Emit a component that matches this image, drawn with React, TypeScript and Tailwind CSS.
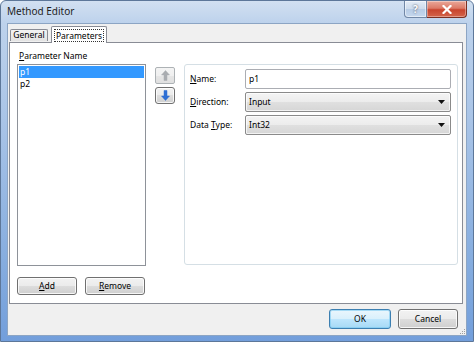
import React from "react";

const font = { fontFamily: '"Noto Sans", "Open Sans", "Liberation Sans", Arial, sans-serif' };

const btn =
  "flex items-center justify-center rounded-[3px] border border-[#707070] bg-[linear-gradient(to_bottom,#f2f2f2_0%,#ebebeb_50%,#dddddd_50%,#cfcfcf_100%)] shadow-[inset_0_0_0_1px_rgba(255,255,255,0.8)] text-[8.5px] text-black";

function Arrow({ color, down }: { color: string; down?: boolean }) {
  return (
    <svg width="9" height="11" viewBox="0 0 9 11" style={{ transform: down ? "rotate(180deg)" : undefined }}>
      <path d="M4.5 0.5 L8.5 5 H6 V10.5 H3 V5 H0.5 Z" fill={color} stroke={color} strokeWidth="0.5" strokeLinejoin="round" />
    </svg>
  );
}

function Combo({ value }: { value: string }) {
  return (
    <div className="flex h-[20px] flex-1 items-center justify-between rounded-[2px] border border-[#8a8a8a] bg-[linear-gradient(to_bottom,#f4f4f4_0%,#ececec_50%,#e0e0e0_50%,#d6d6d6_100%)] pl-[3px] pr-[5px] shadow-[inset_0_0_0_1px_rgba(255,255,255,0.7)]">
      <span className="text-[8.5px] text-black">{value}</span>
      <svg width="7" height="4" viewBox="0 0 7 4">
        <path d="M0 0 H7 L3.5 4 Z" fill="#111" />
      </svg>
    </div>
  );
}

export default function App() {
  return (
    <div className="h-[342px] w-[474px] overflow-hidden bg-white" style={font}>
      <div className="flex h-[342px] w-[474px] flex-col rounded-t-[6px] border border-[#5d7799] bg-[linear-gradient(to_bottom,#d2e0f1_0px,#bdd2ec_22px,#a9c4e7_120px,#86addf_260px,#729edb_342px)]">
        {/* title bar */}
        <div className="flex h-[22px] items-start">
          <span className="pl-[6px] pt-[3px] text-[10px] leading-[14px] text-[#1e1e1e]">Method Editor</span>
          <div className="ml-auto mr-[6px] flex">
            <div className="flex h-[17px] w-[23px] items-center justify-center rounded-bl-[4px] border border-t-0 border-[#7187a6] bg-[linear-gradient(to_bottom,#e4ecf6_0%,#cddbec_50%,#b6cbe5_50%,#c6d8ee_100%)] shadow-[inset_0_0_0_1px_rgba(255,255,255,0.5)]">
              <span className="text-[10px] font-bold leading-none text-white [text-shadow:0_0_2px_#334]">?</span>
            </div>
            <div className="flex h-[17px] w-[40px] items-center justify-center rounded-br-[4px] border border-l-0 border-t-0 border-[#7a2f22] bg-[linear-gradient(to_bottom,#eaa89a_0%,#dc7a67_45%,#c8442e_55%,#d4654b_100%)] shadow-[inset_0_0_0_1px_rgba(255,255,255,0.35)]">
              <svg width="10" height="9" viewBox="0 0 10 9">
                <path d="M1.5 1 L8.5 8 M8.5 1 L1.5 8" stroke="#fff" strokeWidth="2.2" strokeLinecap="square" />
              </svg>
            </div>
          </div>
        </div>

        {/* client */}
        <div className="mx-[6px] mb-[5px] flex flex-1 flex-col border border-[#8ca5c4] bg-[#f0f0f0]">
          {/* tabs */}
          <div className="relative z-10 flex items-end pl-[2px] pt-[2px]">
            <div className="mb-[1px] flex h-[12px] w-[38px] items-center justify-center rounded-t-[2px] border border-b-0 border-[#898c95] bg-[linear-gradient(to_bottom,#f3f3f3,#e3e3e3)] text-[8.5px] leading-none text-black">
              General
            </div>
            <div className="-mb-[1px] ml-[3px] flex h-[17px] w-[56px] items-center justify-center rounded-t-[2px] border border-b-0 border-[#898c95] bg-white">
              <span className="border border-dotted border-[#333] px-[1px] text-[8.5px] leading-[11px] text-black">Parameters</span>
            </div>
          </div>

          {/* tab panel */}
          <div className="ml-[1px] mr-[3px] flex h-[262px] flex-col border border-[#898c95] bg-white pl-[7px] pt-[6px]">
            <div className="mb-[2px] h-[13px] pl-[2px] text-[8.5px] leading-[13px] text-black">
              <span className="underline">P</span>arameter Name
            </div>
            <div className="flex items-start">
              <div className="flex w-[129px] flex-col">
                <div className="flex h-[202px] flex-col border border-[#8e9299] bg-white p-[1px]">
                  <div className="h-[12px] bg-[#3399ff] pl-[1px] text-[8.5px] leading-[12px] text-white">p1</div>
                  <div className="h-[12px] pl-[1px] text-[8.5px] leading-[12px] text-black">p2</div>
                </div>
                <div className="mt-[11px] flex gap-[8px]">
                  <div className={`${btn} h-[18px] w-[60px]`}>
                    <span><span className="underline">A</span>dd</span>
                  </div>
                  <div className={`${btn} h-[18px] w-[60px]`}>
                    <span><span className="underline">R</span>emove</span>
                  </div>
                </div>
              </div>

              <div className="ml-[9px] mt-[3px] flex flex-col gap-[3px]">
                <div className="flex h-[17px] w-[20px] items-center justify-center rounded-[2px] border border-[#adb2b5] bg-[linear-gradient(to_bottom,#f4f4f4_0%,#f0f0f0_50%,#e6e6e6_50%,#e0e0e0_100%)]">
                  <Arrow color="#a9acb0" />
                </div>
                <div className={`${btn} h-[17px] w-[20px]`}>
                  <Arrow color="#2e6fd4" down />
                </div>
              </div>

              <div className="ml-[9px] flex h-[201px] w-[274px] flex-col gap-[3px] rounded-[3px] border border-[#d5dfe5] bg-white pl-[5px] pr-[6px] pt-[4px]">
                <div className="flex h-[20px] items-center">
                  <span className="w-[55px] text-[8.5px] text-black">
                    <span className="underline">N</span>ame:
                  </span>
                  <div className="flex h-[20px] flex-1 items-center rounded-[2px] border border-[#abadb3] border-t-[#abadb3] bg-white pl-[3px] text-[8.5px] text-black">
                    p1
                  </div>
                </div>
                <div className="flex h-[20px] items-center">
                  <span className="w-[55px] text-[8.5px] text-black">
                    <span className="underline">D</span>irection:
                  </span>
                  <Combo value="Input" />
                </div>
                <div className="flex h-[20px] items-center">
                  <span className="w-[55px] text-[8.5px] text-black">
                    Data <span className="underline">T</span>ype:
                  </span>
                  <Combo value="Int32" />
                </div>
              </div>
            </div>
          </div>

          {/* bottom buttons */}
          <div className="relative flex flex-1 items-start justify-end gap-[7px] pr-[8px] pt-[5px]">
            <div className="flex h-[20px] w-[62px] items-center justify-center rounded-[3px] border border-[#3c7fb1] bg-[linear-gradient(to_bottom,#eaf6fd_0%,#d9f0fc_50%,#bee6fd_50%,#a7d9f5_100%)] text-[8.5px] text-black shadow-[inset_0_0_0_1px_rgba(120,200,240,0.6)]">
              OK
            </div>
            <div className={`${btn} h-[20px] w-[60px]`}>Cancel</div>
            <div className="absolute bottom-[1px] right-[1px] grid grid-cols-3 gap-[1px]">
              <span />
              <span />
              <span className="h-[1px] w-[1px] bg-[#a0a0a0]" />
              <span />
              <span className="h-[1px] w-[1px] bg-[#a0a0a0]" />
              <span className="h-[1px] w-[1px] bg-[#a0a0a0]" />
              <span className="h-[1px] w-[1px] bg-[#a0a0a0]" />
              <span className="h-[1px] w-[1px] bg-[#a0a0a0]" />
              <span className="h-[1px] w-[1px] bg-[#a0a0a0]" />
            </div>
          </div>
        </div>
      </div>
    </div>
  );
}
